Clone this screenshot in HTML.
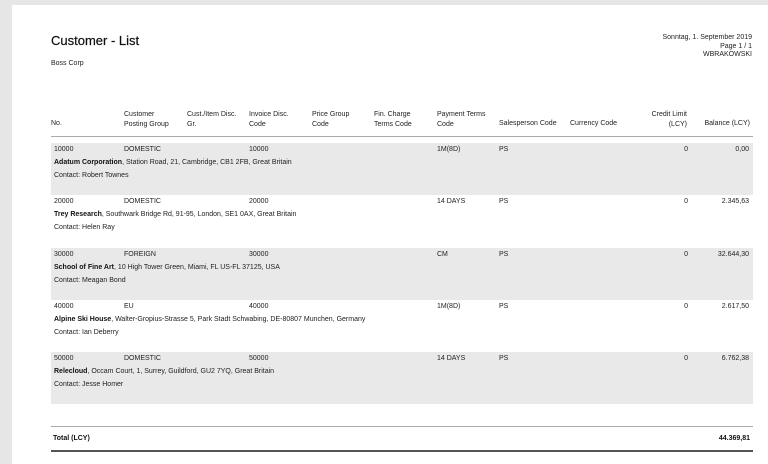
<!DOCTYPE html>
<html><head><meta charset="utf-8"><style>
*{margin:0;padding:0;box-sizing:border-box}
body{width:768px;height:464px;background:#e6e6e6;position:relative;overflow:hidden;font-family:"Liberation Sans",sans-serif;color:#222;font-size:7px}
.page{position:absolute;left:12px;top:5px;width:756px;height:459px;background:#fff}
.a{position:absolute;white-space:nowrap;line-height:8px}
.r{text-align:right}
.row{position:absolute;left:51px;width:702px;height:52px}
.g{background:#e9e9e9}
b{font-weight:bold;color:#111}
</style></head><body>
<div class="page"></div>
<div class="a" style="left:51px;top:33px;font-size:13px;line-height:15px;color:#111;-webkit-text-stroke:0.2px #111">Customer - List</div>
<div class="a" style="left:51px;top:60px">Boss Corp</div>
<div class="a r" style="right:16px;top:34px;line-height:8.5px">Sonntag, 1. September 2019<br>Page 1 / 1<br>WBRAKOWSKI</div>

<div class="a" style="left:51px;top:120px">No.</div>
<div class="a" style="left:124px;top:110px;line-height:10px">Customer<br>Posting Group</div>
<div class="a" style="left:187px;top:110px;line-height:10px">Cust./Item Disc.<br>Gr.</div>
<div class="a" style="left:249px;top:110px;line-height:10px">Invoice Disc.<br>Code</div>
<div class="a" style="left:312px;top:110px;line-height:10px">Price Group<br>Code</div>
<div class="a" style="left:374px;top:110px;line-height:10px">Fin. Charge<br>Terms Code</div>
<div class="a" style="left:437px;top:110px;line-height:10px">Payment Terms<br>Code</div>
<div class="a" style="left:499px;top:120px">Salesperson Code</div>
<div class="a" style="left:570px;top:120px">Currency Code</div>
<div class="a r" style="right:81px;top:110px;line-height:10px">Credit Limit<br>(LCY)</div>
<div class="a r" style="right:18px;top:120px">Balance (LCY)</div>
<div style="position:absolute;left:51px;top:136px;width:702px;height:1px;background:#aaa"></div>

<div class="row g" style="top:143px"></div>
<div class="row" style="top:195px"></div>
<div class="row g" style="top:248px"></div>
<div class="row" style="top:300px"></div>
<div class="row g" style="top:352px"></div>

<div class="a" style="left:54px;top:146px">10000</div><div class="a" style="left:124px;top:146px">DOMESTIC</div><div class="a" style="left:249px;top:146px">10000</div><div class="a" style="left:437px;top:146px">1M(8D)</div><div class="a" style="left:499px;top:146px">PS</div><div class="a r" style="right:80px;top:146px">0</div><div class="a r" style="right:19px;top:146px">0,00</div>
<div class="a" style="left:54px;top:159px"><b>Adatum Corporation</b>, Station Road, 21, Cambridge, CB1 2FB, Great Britain</div>
<div class="a" style="left:54px;top:172px">Contact: Robert Townes</div>

<div class="a" style="left:54px;top:198px">20000</div><div class="a" style="left:124px;top:198px">DOMESTIC</div><div class="a" style="left:249px;top:198px">20000</div><div class="a" style="left:437px;top:198px">14 DAYS</div><div class="a" style="left:499px;top:198px">PS</div><div class="a r" style="right:80px;top:198px">0</div><div class="a r" style="right:19px;top:198px">2.345,63</div>
<div class="a" style="left:54px;top:211px"><b>Trey Research</b>, Southwark Bridge Rd, 91-95, London, SE1 0AX, Great Britain</div>
<div class="a" style="left:54px;top:224px">Contact: Helen Ray</div>

<div class="a" style="left:54px;top:251px">30000</div><div class="a" style="left:124px;top:251px">FOREIGN</div><div class="a" style="left:249px;top:251px">30000</div><div class="a" style="left:437px;top:251px">CM</div><div class="a" style="left:499px;top:251px">PS</div><div class="a r" style="right:80px;top:251px">0</div><div class="a r" style="right:19px;top:251px">32.644,30</div>
<div class="a" style="left:54px;top:264px"><b>School of Fine Art</b>, 10 High Tower Green, Miami, FL US-FL 37125, USA</div>
<div class="a" style="left:54px;top:277px">Contact: Meagan Bond</div>

<div class="a" style="left:54px;top:303px">40000</div><div class="a" style="left:124px;top:303px">EU</div><div class="a" style="left:249px;top:303px">40000</div><div class="a" style="left:437px;top:303px">1M(8D)</div><div class="a" style="left:499px;top:303px">PS</div><div class="a r" style="right:80px;top:303px">0</div><div class="a r" style="right:19px;top:303px">2.617,50</div>
<div class="a" style="left:54px;top:316px"><b>Alpine Ski House</b>, Walter-Gropius-Strasse 5, Park Stadt Schwabing, DE-80807 Munchen, Germany</div>
<div class="a" style="left:54px;top:329px">Contact: Ian Deberry</div>

<div class="a" style="left:54px;top:355px">50000</div><div class="a" style="left:124px;top:355px">DOMESTIC</div><div class="a" style="left:249px;top:355px">50000</div><div class="a" style="left:437px;top:355px">14 DAYS</div><div class="a" style="left:499px;top:355px">PS</div><div class="a r" style="right:80px;top:355px">0</div><div class="a r" style="right:19px;top:355px">6.762,38</div>
<div class="a" style="left:54px;top:368px"><b>Relecloud</b>, Occam Court, 1, Surrey, Guildford, GU2 7YQ, Great Britain</div>
<div class="a" style="left:54px;top:381px">Contact: Jesse Homer</div>

<div style="position:absolute;left:51px;top:426px;width:702px;height:1px;background:#aaa"></div>
<div class="a" style="left:53px;top:435px"><b>Total (LCY)</b></div>
<div class="a r" style="right:18px;top:435px"><b>44.369,81</b></div>
<div style="position:absolute;left:51px;top:450px;width:702px;height:2px;background:#555"></div>
</body></html>
